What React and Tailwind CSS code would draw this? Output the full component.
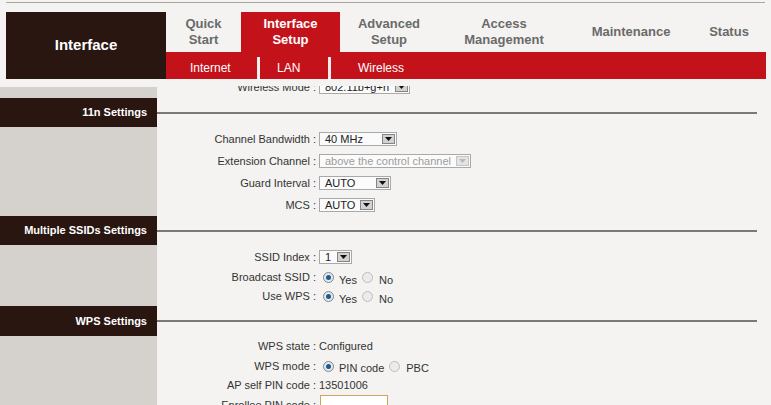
import React from 'react';
import clsx from 'clsx';

const tabs = [
  { top: 'Quick', bottom: 'Start', w: 'w-[75px]' },
  { top: 'Interface', bottom: 'Setup', w: 'w-[99px]', active: true },
  { top: 'Advanced', bottom: 'Setup', w: 'w-[98px]' },
  { top: 'Access', bottom: 'Management', w: 'w-[132px]' },
  { top: 'Maintenance', w: 'w-[122px]' },
  { top: 'Status', w: 'w-[74px]' },
];

function Select({ value, width, disabled }) {
  return (
    <div
      className={clsx(
        'flex h-[14px] items-center justify-between border border-[#a9a9a9] bg-[#fbfbfb] pl-[5px] pr-[1px]',
        width
      )}
    >
      <span className={clsx('leading-none', disabled ? 'text-[#9c9c9c]' : 'text-[#222]')}>{value}</span>
      <span
        className={clsx(
          'flex h-[10px] w-[13px] items-center justify-center border',
          disabled ? 'border-[#c4c4c4] bg-[#e4e4e4]' : 'border-[#858585] bg-[#d2d2d2]'
        )}
      >
        <svg width="7" height="4" viewBox="0 0 7 4">
          <path d="M0 0h7L3.5 4z" fill={disabled ? '#b8b8b8' : '#111'} />
        </svg>
      </span>
    </div>
  );
}

function Radio({ checked }) {
  return (
    <span
      className={clsx(
        'flex h-[11px] w-[11px] shrink-0 items-center justify-center rounded-full border',
        checked ? 'border-[#7b8794] bg-[#e6e8ea]' : 'border-[#bdbdbd] bg-[#ebebeb]'
      )}
    >
      {checked && <span className="h-[5px] w-[5px] rounded-full bg-[#1d5a92]" />}
    </span>
  );
}

function RadioPair({ a, b }) {
  return (
    <div className="ml-[4px] flex items-center">
      <Radio checked />
      <span className="ml-[5px] pt-[5px]">{a}</span>
      <span className="ml-[5px]">
        <Radio />
      </span>
      <span className="ml-[6px] pt-[5px]">{b}</span>
    </div>
  );
}

function FormRow({ label, h, children }) {
  return (
    <div className={clsx('flex items-center', h)}>
      <div className="w-[159px] shrink-0 text-right leading-none">{label} :</div>
      <div className="ml-[3px] flex items-center leading-none">{children}</div>
    </div>
  );
}

function SectionBar({ title, h }) {
  return (
    <div className={clsx('flex', h)}>
      <div className="flex w-[157px] shrink-0 items-center justify-end bg-[#2a1611] pr-[10px] text-[11px] font-bold text-white">
        {title}
      </div>
      <div className="flex flex-1 items-center pr-[14px]">
        <div className="h-[2px] w-full bg-[#7c7975]" />
      </div>
    </div>
  );
}

function Body({ className, children }) {
  return (
    <div className="flex">
      <div className="w-[157px] shrink-0 bg-[#d5d2ce]" />
      <div className={clsx('flex flex-1 flex-col', className)}>{children}</div>
    </div>
  );
}

export default function App() {
  return (
    <div className="h-[405px] w-[771px] overflow-hidden bg-[#f4f3f1] font-['Liberation_Sans',Arial,sans-serif] text-[11px] text-[#333]">
      {/* top strip */}
      <div className="h-[12px] px-[6px] pt-[2px]">
        <div className="h-px bg-[#a9a6a2]" />
      </div>

      {/* header */}
      <div className="flex h-[67px] pl-[6px]">
        <div className="flex w-[160px] items-center justify-center bg-[#2a1611] text-[15px] font-bold text-white">
          Interface
        </div>
        <div className="flex w-[600px] flex-col">
          <div className="flex h-[40px]">
            {tabs.map((t) => (
              <div
                key={t.top}
                className={clsx(
                  'flex flex-col items-center justify-center text-[13px] font-bold leading-[16px]',
                  t.w,
                  t.active ? 'bg-[#c4121b] text-white' : 'text-[#6a6a6a]'
                )}
              >
                <span>{t.top}</span>
                {t.bottom && <span>{t.bottom}</span>}
              </div>
            ))}
          </div>
          <div className="flex h-[27px] bg-[#c4121b] text-[12px] text-white">
            <div className="flex w-[91px] items-center pl-[24px] pt-[5px]">Internet</div>
            <div className="mt-[5px] w-[3px] bg-[#f4eeee]" />
            <div className="flex w-[68px] items-center pl-[17px] pt-[5px]">LAN</div>
            <div className="mt-[5px] w-[3px] bg-[#f4eeee]" />
            <div className="flex items-center pl-[27px] pt-[5px]">Wireless</div>
          </div>
        </div>
      </div>
      <div className="h-[7px]" />

      {/* content (scrolled under the header) */}
      <div className="flex flex-col">
        <div className="flex h-[12px] overflow-hidden">
          <div className="flex w-[157px] shrink-0 flex-col">
            <div className="h-px" />
            <div className="flex-1 bg-[#d5d2ce]" />
          </div>
          <div className="flex-1">
            <div className="-mt-[10px]">
              <FormRow label="Wireless Mode" h="h-[22px]">
                <Select value="802.11b+g+n" width="w-[91px]" />
              </FormRow>
            </div>
          </div>
        </div>

        <SectionBar title="11n Settings" h="h-[29px]" />
        <Body className="pt-[1px]">
          <FormRow label="Channel Bandwidth" h="h-[22px]">
            <Select value="40 MHz" width="w-[78px]" />
          </FormRow>
          <FormRow label="Extension Channel" h="h-[22px]">
            <Select value="above the control channel" width="w-[152px]" disabled />
          </FormRow>
          <FormRow label="Guard Interval" h="h-[22px]">
            <Select value="AUTO" width="w-[72px]" />
          </FormRow>
          <FormRow label="MCS" h="h-[22px]">
            <Select value="AUTO" width="w-[56px]" />
          </FormRow>
        </Body>

        <SectionBar title="Multiple SSIDs Settings" h="h-[29px]" />
        <Body className="pt-[1px]">
          <FormRow label="SSID Index" h="h-[22px]">
            <Select value="1" width="w-[33px]" />
          </FormRow>
          <FormRow label="Broadcast SSID" h="h-[19px]">
            <RadioPair a="Yes" b="No" />
          </FormRow>
          <FormRow label="Use WPS" h="h-[19px]">
            <RadioPair a="Yes" b="No" />
          </FormRow>
        </Body>

        <SectionBar title="WPS Settings" h="h-[30px]" />
        <Body>
          <FormRow label="WPS state" h="h-[20px]">
            <span>Configured</span>
          </FormRow>
          <FormRow label="WPS mode" h="h-[20px]">
            <RadioPair a="PIN code" b="PBC" />
          </FormRow>
          <FormRow label="AP self PIN code" h="h-[19px]">
            <span>13501006</span>
          </FormRow>
          <FormRow label="Enrollee PIN code" h="h-[20px]">
            <div className="ml-[1px] h-[20px] w-[68px] border border-[#c9a65a] bg-white" />
          </FormRow>
        </Body>
      </div>
    </div>
  );
}
